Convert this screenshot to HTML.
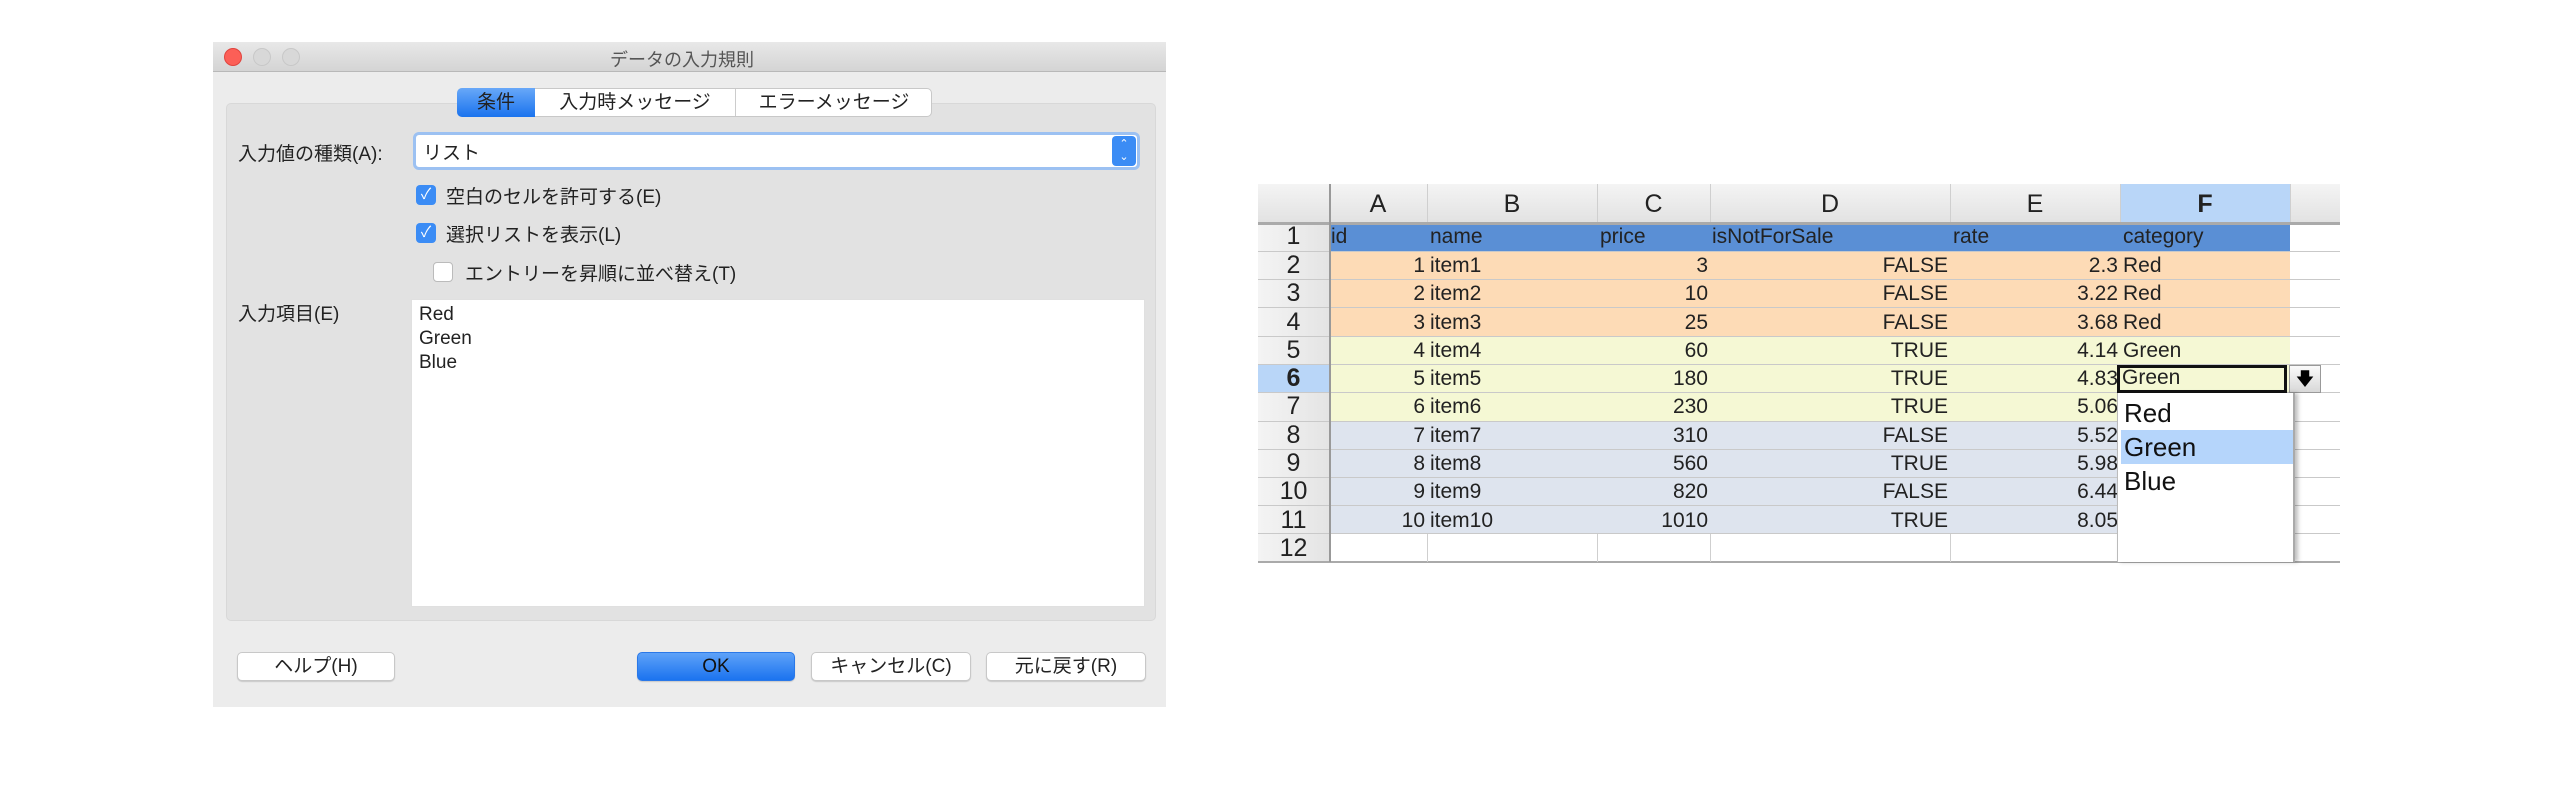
<!DOCTYPE html>
<html><head><meta charset="utf-8"><style>
*{margin:0;padding:0;box-sizing:border-box}
body{width:2560px;height:800px;background:#fff;position:relative;overflow:hidden;font-family:"Liberation Sans","Noto Sans CJK JP",sans-serif;color:#222}
.a{position:absolute}
.dlg{left:213px;top:42px;width:953px;height:665px;background:#ececec;}
.tb{left:213px;top:42px;width:953px;height:30px;background:linear-gradient(#e8e8e8,#d4d4d4);border-bottom:1px solid #b8b8b8}
.tl{width:18px;height:18px;border-radius:50%;top:48px;background:#d8d8d8;border:1px solid #c8c8c8}
.lbl{font-size:19px;white-space:nowrap}
.btn{height:29px;top:652px;background:#fff;border:1px solid #c8c8c8;border-radius:5px;font-size:19px;text-align:center;line-height:27px;box-shadow:0 1px 1px rgba(0,0,0,.15)}
.cb{width:20px;height:20px;border-radius:4px}
.on{background:#3b8cf5;color:#fff;font-size:15px;text-align:center;line-height:20px}
.off{background:#fff;border:1px solid #bbb}
.c{position:absolute;font-size:21px;line-height:28px;white-space:nowrap}
.r{text-align:right}
.hl{position:absolute;left:1258px;width:1082px;height:1px;background:#c9c9c9}
.vl{position:absolute;top:184px;width:1px;height:378px;background:#cfcfcf}
</style></head><body>
<div class="a dlg"></div>
<div class="a tb"></div>
<div class="a tl" style="left:224px;background:#fc5f57;border-color:#e0443e"></div>
<div class="a tl" style="left:253px"></div>
<div class="a tl" style="left:282px"></div>
<div class="a lbl" style="left:610px;top:46px;font-size:18px;color:#555">データの入力規則</div>
<div class="a" style="left:226px;top:103px;width:930px;height:518px;background:#e2e2e2;border:1px solid #d8d8d8;border-radius:5px"></div>
<div class="a" style="left:457px;top:88px;width:475px;height:29px;background:#fff;border:1px solid #c8c8c8;border-radius:5px"></div>
<div class="a lbl" style="left:457px;top:88px;width:78px;height:29px;background:linear-gradient(#68a8f8,#1a73ee);border-radius:5px 0 0 5px;text-align:center;line-height:29px">条件</div>
<div class="a lbl" style="left:535px;top:88px;width:200px;text-align:center;line-height:29px">入力時メッセージ</div>
<div class="a" style="left:735px;top:89px;width:1px;height:27px;background:#ccc"></div>
<div class="a lbl" style="left:736px;top:88px;width:196px;text-align:center;line-height:29px">エラーメッセージ</div>
<div class="a lbl" style="left:238px;top:139px">入力値の種類(A):</div>
<div class="a" style="left:413px;top:132px;width:727px;height:38px;border:3px solid #9cc1f2;border-radius:6px;background:#fff"></div>
<div class="a lbl" style="left:423px;top:138px">リスト</div>
<div class="a" style="left:1112px;top:136px;width:24px;height:30px;background:#3b8cf5;border-radius:4px;color:#fff;font-size:11px;text-align:center;line-height:13px;padding-top:2px">⌃<br>⌄</div>
<div class="a cb on" style="left:416px;top:185px">✓</div>
<div class="a lbl" style="left:446px;top:182px">空白のセルを許可する(E)</div>
<div class="a cb on" style="left:416px;top:223px">✓</div>
<div class="a lbl" style="left:446px;top:220px">選択リストを表示(L)</div>
<div class="a cb off" style="left:433px;top:262px"></div>
<div class="a lbl" style="left:465px;top:259px">エントリーを昇順に並べ替え(T)</div>
<div class="a lbl" style="left:238px;top:299px">入力項目(E)</div>
<div class="a" style="left:411px;top:299px;width:734px;height:308px;background:#fff;border:1px solid #e0e0e0"></div>
<div class="a lbl" style="left:419px;top:303px;line-height:24px">Red<br>Green<br>Blue</div>
<div class="a btn" style="left:237px;width:158px">ヘルプ(H)</div>
<div class="a btn" style="left:637px;width:158px;background:linear-gradient(#5ea2f8,#1b73ef);border-color:#2a78e8;color:#111">OK</div>
<div class="a btn" style="left:811px;width:160px">キャンセル(C)</div>
<div class="a btn" style="left:986px;width:160px">元に戻す(R)</div>

<div class="a" style="left:1258px;top:184px;width:1082px;height:38px;background:linear-gradient(#f4f4f4,#e2e2e2)"></div>
<div class="a" style="left:1258px;top:222px;width:71px;height:340px;background:linear-gradient(90deg,#f4f4f4,#e4e4e4)"></div>
<div class="a" style="left:2120px;top:184px;width:170px;height:38px;background:#b9d6f8"></div>
<div class="a" style="left:1258px;top:364px;width:71px;height:28px;background:#b9d6f8"></div>
<div class="a" style="left:1329px;top:222px;width:961px;height:29px;background:#5a8fd5"></div>
<div class="a" style="left:1329px;top:251px;width:961px;height:85px;background:#fddbb6"></div>
<div class="a" style="left:1329px;top:336px;width:961px;height:85px;background:#f5f8d4"></div>
<div class="a" style="left:1329px;top:421px;width:961px;height:113px;background:#dee4ee"></div>
<div class="hl" style="top:222px;height:3px;background:#aaa"></div>
<div class="hl" style="top:251px"></div><div class="hl" style="top:279px"></div><div class="hl" style="top:307px"></div><div class="hl" style="top:336px"></div><div class="hl" style="top:364px"></div><div class="hl" style="top:392px"></div><div class="hl" style="top:421px"></div><div class="hl" style="top:449px"></div><div class="hl" style="top:477px"></div><div class="hl" style="top:505px"></div><div class="hl" style="top:533px"></div><div class="hl" style="top:561px;height:2px;background:#aaa"></div>
<div class="vl" style="left:1329px;width:2px;background:#999"></div>
<div class="vl" style="left:1427px;height:38px"></div><div class="vl" style="left:1597px;height:38px"></div><div class="vl" style="left:1710px;height:38px"></div><div class="vl" style="left:1950px;height:38px"></div><div class="vl" style="left:2120px;height:38px"></div><div class="vl" style="left:2290px;height:38px"></div>
<div class="vl" style="left:1427px;top:534px;height:28px"></div><div class="vl" style="left:1597px;top:534px;height:28px"></div><div class="vl" style="left:1710px;top:534px;height:28px"></div><div class="vl" style="left:1950px;top:534px;height:28px"></div>
<div class="c" style="left:1329px;top:190px;width:98px;text-align:center;font-size:25px">A</div>
<div class="c" style="left:1427px;top:190px;width:170px;text-align:center;font-size:25px">B</div>
<div class="c" style="left:1597px;top:190px;width:113px;text-align:center;font-size:25px">C</div>
<div class="c" style="left:1710px;top:190px;width:240px;text-align:center;font-size:25px">D</div>
<div class="c" style="left:1950px;top:190px;width:170px;text-align:center;font-size:25px">E</div>
<div class="c" style="left:2120px;top:190px;width:170px;text-align:center;font-size:25px;font-weight:bold">F</div>
<div class="c" style="left:1258px;top:222px;width:71px;text-align:center;font-size:25px;line-height:29px">1</div>
<div class="c" style="left:1258px;top:251px;width:71px;text-align:center;font-size:25px;line-height:28.3px">2<br>3<br>4<br>5<br><b>6</b><br>7<br>8<br>9<br>10<br>11<br>12</div>
<div class="c" style="left:1331px;top:223px">id</div>
<div class="c" style="left:1430px;top:223px">name</div>
<div class="c" style="left:1600px;top:223px">price</div>
<div class="c" style="left:1712px;top:223px">isNotForSale</div>
<div class="c" style="left:1953px;top:223px">rate</div>
<div class="c" style="left:2123px;top:223px">category</div>
<div class="c r" style="left:1329px;top:252px;width:96px;line-height:28.3px">1<br>2<br>3<br>4<br>5<br>6<br>7<br>8<br>9<br>10</div>
<div class="c" style="left:1430px;top:252px;line-height:28.3px">item1<br>item2<br>item3<br>item4<br>item5<br>item6<br>item7<br>item8<br>item9<br>item10</div>
<div class="c r" style="left:1597px;top:252px;width:111px;line-height:28.3px">3<br>10<br>25<br>60<br>180<br>230<br>310<br>560<br>820<br>1010</div>
<div class="c r" style="left:1710px;top:252px;width:238px;line-height:28.3px">FALSE<br>FALSE<br>FALSE<br>TRUE<br>TRUE<br>TRUE<br>FALSE<br>TRUE<br>FALSE<br>TRUE</div>
<div class="c r" style="left:1950px;top:252px;width:168px;line-height:28.3px">2.3<br>3.22<br>3.68<br>4.14<br>4.83<br>5.06<br>5.52<br>5.98<br>6.44<br>8.05</div>
<div class="c" style="left:2123px;top:252px;line-height:28.3px">Red<br>Red<br>Red<br>Green</div>
<div class="a" style="left:2117px;top:365px;width:170px;height:28px;border:3px solid #111;background:#f5f8d4"></div>
<div class="c" style="left:2122px;top:364px">Green</div>
<div class="a" style="left:2289px;top:365px;width:32px;height:28px;background:linear-gradient(#fafafa,#d8d8d8);border:1px solid #999;text-align:center;font-size:18px;line-height:26px;color:#000">🡇</div>
<div class="a" style="left:2117px;top:393px;width:178px;height:169px;background:#fff;border-left:1px solid #bbb;border-right:2px solid #aaa;box-shadow:3px 0 4px rgba(0,0,0,.25)"></div>
<div class="a" style="left:2121px;top:430px;width:172px;height:34px;background:#b5d5fb"></div>
<div class="c" style="left:2124px;top:396px;font-size:26px;line-height:34px;color:#111">Red<br>Green<br>Blue</div>
</body></html>
